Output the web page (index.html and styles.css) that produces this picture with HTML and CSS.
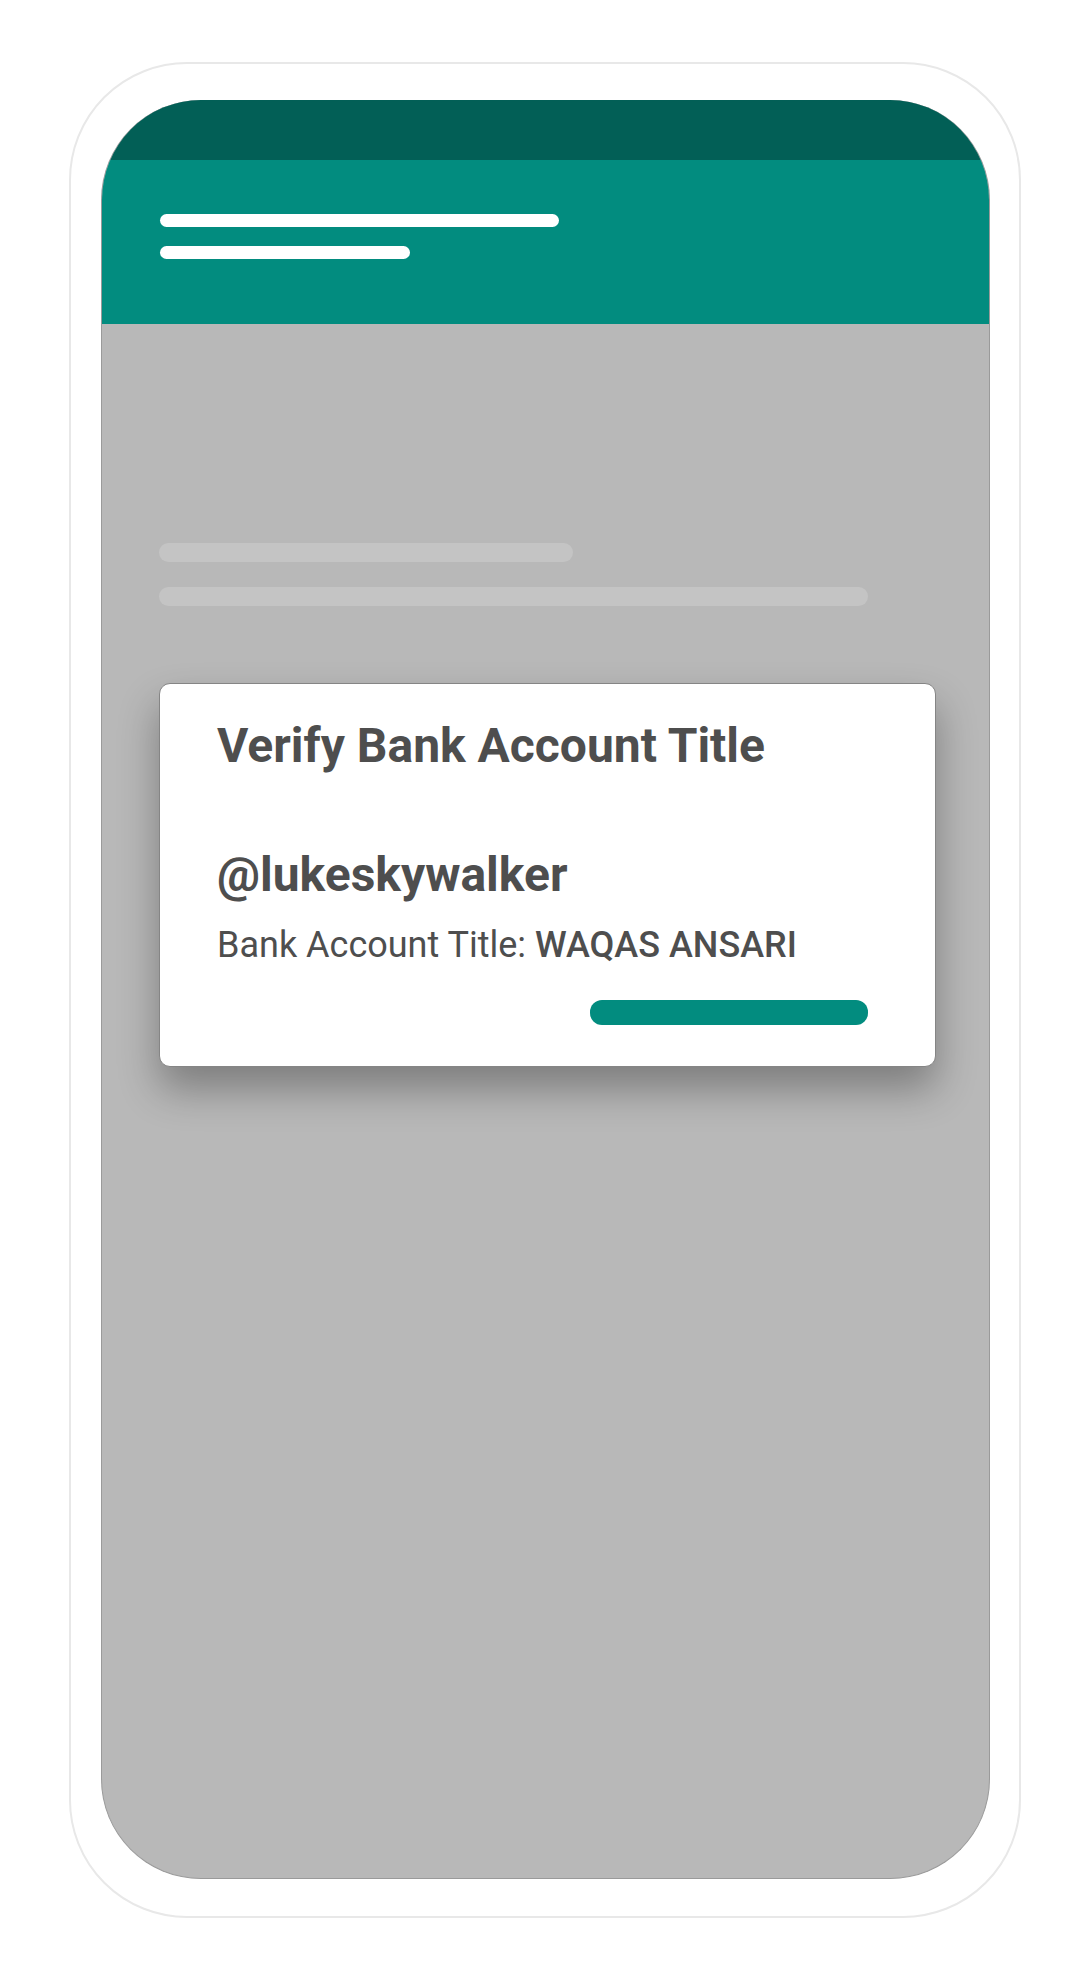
FILE: index.html
```html
<!DOCTYPE html>
<html lang="en">
<head>
<meta charset="utf-8">
<title>Verify Bank Account Title</title>
<link rel="stylesheet" href="styles.css">
</head>
<body>
<div class="phone">
  <div class="screen">
    <div class="status-bar"></div>
    <div class="app-header">
      <div class="hbar hbar-long"></div>
      <div class="hbar hbar-short"></div>
    </div>
    <div class="content">
      <div class="skel skel-short"></div>
      <div class="skel skel-long"></div>
      <div class="card">
        <h1 class="card-title">Verify Bank Account Title</h1>
        <div class="handle">@lukeskywalker</div>
        <div class="account">Bank Account Title: <span class="account-name">WAQAS ANSARI</span></div>
        <div class="card-actions">
          <div class="btn-bar"></div>
        </div>
      </div>
    </div>
  </div>
</div>
</body>
</html>
```
FILE: styles.css
```css
html, body {
  margin: 0;
  padding: 0;
  background: #ffffff;
}
body {
  width: 1090px;
  height: 1978px;
  font-family: Roboto, "Liberation Sans", sans-serif;
  overflow: hidden;
}
.phone {
  box-sizing: border-box;
  margin: 62px 0 0 69px;
  width: 952px;
  height: 1856px;
  border: 2px solid #e8e8e8;
  border-radius: 118px;
  padding: 36px 29px 37px 30px;
}
.screen {
  box-sizing: border-box;
  width: 889px;
  height: 1779px;
  border-radius: 100px;
  overflow: hidden;
  background: #b8b8b8;
  border: 1px solid #9a9a9a;
  border-top: none;
  display: flex;
  flex-direction: column;
}
.status-bar {
  height: 60px;
  background: #025f56;
  flex: none;
}
.app-header {
  height: 164px;
  background: #028c7f;
  flex: none;
  box-sizing: border-box;
  padding: 54px 0 0 58px;
  display: flex;
  flex-direction: column;
  gap: 19px;
}
.hbar {
  height: 13px;
  background: #ffffff;
  border-radius: 7px;
}
.hbar-long { width: 399px; }
.hbar-short { width: 250px; }
.content {
  padding: 219px 0 0 57px;
  display: flex;
  flex-direction: column;
}
.skel {
  height: 19px;
  border-radius: 10px;
  background: #c4c4c4;
}
.skel-short { width: 414px; }
.skel-long { width: 709px; margin-top: 25px; }
.card {
  box-sizing: border-box;
  margin-top: 77px;
  width: 777px;
  height: 384px;
  background: #ffffff;
  border: 1.5px solid #858585;
  border-radius: 11px;
  box-shadow: 0 22px 40px rgba(0, 0, 0, 0.32);
  padding: 34px 52px 0 57px;
  color: #4e4e4e;
}
.card-title {
  margin: 0;
  font-size: 48px;
  line-height: 56px;
  font-weight: 700;
}
.handle {
  margin-top: 73px;
  font-size: 48px;
  line-height: 56px;
  font-weight: 700;
}
.account {
  margin-top: 22px;
  font-size: 36px;
  line-height: 40px;
  font-weight: 400;
}
.account-name {
  font-weight: 500;
}
.card-actions {
  margin-top: 35px;
  display: flex;
  justify-content: flex-end;
  padding-right: 15px;
}
.btn-bar {
  width: 278px;
  height: 25px;
  border-radius: 12px;
  background: #028c7f;
}
```
